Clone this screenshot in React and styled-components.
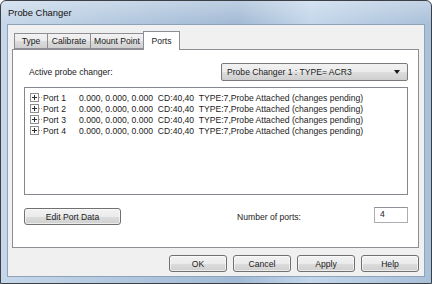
import styled, { createGlobalStyle } from "styled-components";

const GlobalStyle = createGlobalStyle`
  html, body {
    margin: 0;
    padding: 0;
    background: #ffffff;
  }
  body {
    font-family: "Liberation Sans", Arial, sans-serif;
    font-size: 8.6px;
    color: #1b1b1b;
  }
`;

const ports = [1, 2, 3, 4];

export default function App() {
  return (
    <>
      <GlobalStyle />
      <Window>
        <TitleBar>Probe Changer</TitleBar>
        <Client>
          <Tabs>
            <Tab $w={34}>Type</Tab>
            <Tab $w={44}>Calibrate</Tab>
            <Tab $w={54}>Mount Point</Tab>
            <Tab $w={37} $active>
              Ports
            </Tab>
          </Tabs>
          <Panel>
            <TopRow>
              <Label>Active probe changer:</Label>
              <Combo>
                <span>Probe Changer 1 : TYPE= ACR3</span>
                <Arrow />
              </Combo>
            </TopRow>
            <List>
              {ports.map((n) => (
                <TreeRow key={n}>
                  <Expander>
                    <svg width="9" height="9" viewBox="0 0 9 9">
                      <rect x="0.5" y="0.5" width="8" height="8" fill="#fbfbfb" stroke="#8f8f8f" />
                      <path d="M2 4.5h5M4.5 2v5" stroke="#303030" strokeWidth="1" />
                    </svg>
                  </Expander>
                  <Connector />
                  <PortName>Port {n}</PortName>
                  <PortData>
                    {"0.000, 0.000, 0.000  CD:40,40  TYPE:7,Probe Attached (changes pending)"}
                  </PortData>
                </TreeRow>
              ))}
            </List>
            <BottomRow>
              <Button $w={97}>Edit Port Data</Button>
              <CountLabel>Number of ports:</CountLabel>
              <NumberBox>4</NumberBox>
            </BottomRow>
          </Panel>
          <Actions>
            <Button $w={58}>OK</Button>
            <Button $w={58}>Cancel</Button>
            <Button $w={58}>Apply</Button>
            <Button $w={58}>Help</Button>
          </Actions>
        </Client>
      </Window>
    </>
  );
}

const Window = styled.div`
  width: 432px;
  height: 284px;
  box-sizing: border-box;
  border: 1px solid #3c4046;
  border-radius: 6px 6px 0 0;
  background: linear-gradient(
    to right,
    #c6d7e9 0%,
    #b1c7de 30%,
    #a2bad5 55%,
    #c3d6ea 72%,
    #a9c0d9 100%
  );
  display: flex;
  flex-direction: column;
  overflow: hidden;
`;

const TitleBar = styled.div`
  height: 23px;
  display: flex;
  align-items: center;
  padding-left: 7px;
  font-size: 9.4px;
  color: #111;
  background: linear-gradient(to bottom, rgba(255, 255, 255, 0.3), rgba(255, 255, 255, 0));
`;

const Client = styled.div`
  flex: 1;
  margin: 0 6px 6px 6px;
  background: #f0f0f0;
  border: 1px solid #8ea3ba;
  display: flex;
  flex-direction: column;
`;

const Tabs = styled.div`
  display: flex;
  align-items: flex-end;
  height: 24px;
  padding-left: 7px;
  position: relative;
  z-index: 1;
`;

const Tab = styled.div`
  width: ${(p) => p.$w}px;
  height: ${(p) => (p.$active ? 19 : 16)}px;
  box-sizing: border-box;
  border: 1px solid #8c8e94;
  border-bottom: ${(p) => (p.$active ? "none" : "1px solid #8c8e94")};
  margin-left: -1px;
  margin-bottom: ${(p) => (p.$active ? -1 : 0)}px;
  display: flex;
  align-items: center;
  justify-content: center;
  white-space: nowrap;
  background: ${(p) =>
    p.$active
      ? "#ffffff"
      : "linear-gradient(to bottom, #f2f2f2 0%, #ebebeb 50%, #dddddd 51%, #cfcfcf 100%)"};
`;

const Panel = styled.div`
  margin: 0 5px 0 4px;
  height: 199px;
  box-sizing: border-box;
  background: #ffffff;
  border: 1px solid #8c8e94;
  padding: 13px 10px 0 11px;
  display: flex;
  flex-direction: column;
`;

const TopRow = styled.div`
  display: flex;
  align-items: center;
  justify-content: space-between;
  height: 18px;
`;

const Label = styled.span`
  padding-left: 5px;
`;

const Combo = styled.div`
  width: 187px;
  height: 18px;
  box-sizing: border-box;
  border: 1px solid #7a7a7a;
  border-radius: 2px;
  background: linear-gradient(to bottom, #f2f2f2 0%, #ebebeb 50%, #dddddd 51%, #cfcfcf 100%);
  display: flex;
  align-items: center;
  justify-content: space-between;
  padding: 0 7px 0 5px;
`;

const Arrow = styled.span`
  width: 0;
  height: 0;
  border-left: 3px solid transparent;
  border-right: 3px solid transparent;
  border-top: 4px solid #1a1a1a;
`;

const List = styled.div`
  margin-top: 6px;
  height: 108px;
  box-sizing: border-box;
  border: 1px solid #828790;
  background: #ffffff;
  padding: 4px 0 0 5px;
`;

const TreeRow = styled.div`
  display: flex;
  align-items: center;
  height: 11px;
  white-space: pre;
  font-size: 8.6px;
`;

const Expander = styled.span`
  display: flex;
  width: 9px;
  height: 9px;
`;

const Connector = styled.span`
  width: 3px;
  border-top: 1px dotted #a0a0a0;
  margin-right: 1px;
`;

const PortName = styled.span`
  width: 36px;
`;

const PortData = styled.span``;

const BottomRow = styled.div`
  display: flex;
  align-items: center;
  margin-top: 13px;
  height: 17px;
`;

const Button = styled.div`
  width: ${(p) => p.$w}px;
  height: 17px;
  box-sizing: border-box;
  border: 1px solid #707070;
  border-radius: 3px;
  background: linear-gradient(to bottom, #f2f2f2 0%, #ebebeb 50%, #dddddd 51%, #cfcfcf 100%);
  box-shadow: inset 0 0 0 1px rgba(255, 255, 255, 0.6);
  display: flex;
  align-items: center;
  justify-content: center;
  color: #1b1b1b;
`;

const CountLabel = styled.span`
  margin-left: 116px;
  flex: 1;
`;

const NumberBox = styled.div`
  width: 34px;
  height: 16px;
  box-sizing: border-box;
  border: 1px solid #abadb3;
  border-top-color: #8f9299;
  background: #fff;
  padding: 1px 0 0 5px;
  margin-top: -3px;
`;

const Actions = styled.div`
  display: flex;
  justify-content: flex-end;
  gap: 6px;
  padding: 7px 5px 0 0;
`;
